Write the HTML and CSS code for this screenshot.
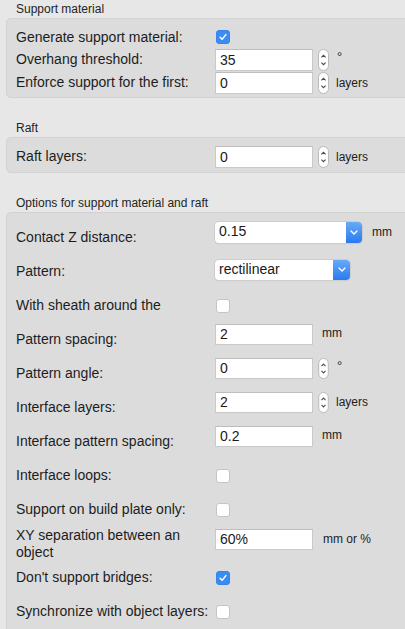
FILE: index.html
```html
<!DOCTYPE html>
<html>
<head>
<meta charset="utf-8">
<link rel="stylesheet" href="styles.css">
</head>
<body>
<div class="page">

  <div class="section">
    <div class="heading">Support material</div>
    <div class="box compact box-support">
      <div class="row first">
        <div class="label">Generate support material:</div>
        <span class="cb checked"><svg viewBox="0 0 14 14"><path d="M3.6 7.3 L6 9.7 L10.4 4.2" class="tick"/></svg></span>
      </div>
      <div class="row">
        <div class="label">Overhang threshold:</div>
        <div class="ctl">
          <div class="input">35</div>
          <svg class="spin" viewBox="0 0 11 22"><rect x="0.5" y="0.5" width="10" height="21" rx="5" class="spin-bg"/><path d="M3.4 8.4 L5.5 6.3 L7.6 8.4" class="chev"/><path d="M3.4 13.6 L5.5 15.7 L7.6 13.6" class="chev"/></svg>
          <span class="unit deg">°</span>
        </div>
      </div>
      <div class="row">
        <div class="label">Enforce support for the first:</div>
        <div class="ctl">
          <div class="input">0</div>
          <svg class="spin" viewBox="0 0 11 22"><rect x="0.5" y="0.5" width="10" height="21" rx="5" class="spin-bg"/><path d="M3.4 8.4 L5.5 6.3 L7.6 8.4" class="chev"/><path d="M3.4 13.6 L5.5 15.7 L7.6 13.6" class="chev"/></svg>
          <span class="unit">layers</span>
        </div>
      </div>
    </div>
  </div>

  <div class="section">
    <div class="heading">Raft</div>
    <div class="box compact box-raft">
      <div class="row">
        <div class="label">Raft layers:</div>
        <div class="ctl">
          <div class="input">0</div>
          <svg class="spin" viewBox="0 0 11 22"><rect x="0.5" y="0.5" width="10" height="21" rx="5" class="spin-bg"/><path d="M3.4 8.4 L5.5 6.3 L7.6 8.4" class="chev"/><path d="M3.4 13.6 L5.5 15.7 L7.6 13.6" class="chev"/></svg>
          <span class="unit">layers</span>
        </div>
      </div>
    </div>
  </div>

  <div class="section">
    <div class="heading">Options for support material and raft</div>
    <div class="box opts">
      <div class="row">
        <div class="label">Contact Z distance:</div>
        <div class="ctl">
          <div class="combo combo-wide">
            <span class="combo-text">0.15</span>
            <span class="combo-btn"><svg viewBox="0 0 8 5"><path d="M1 1 L4 4 L7 1" class="chev-w"/></svg></span>
          </div>
          <span class="unit unit-combo">mm</span>
        </div>
      </div>
      <div class="row">
        <div class="label">Pattern:</div>
        <div class="ctl ctl-low">
          <div class="combo combo-narrow">
            <span class="combo-text">rectilinear</span>
            <span class="combo-btn"><svg viewBox="0 0 8 5"><path d="M1 1 L4 4 L7 1" class="chev-w"/></svg></span>
          </div>
        </div>
      </div>
      <div class="row">
        <div class="label">With sheath around the</div>
        <span class="cb"></span>
      </div>
      <div class="row">
        <div class="label">Pattern spacing:</div>
        <div class="ctl">
          <div class="input">2</div>
          <span class="unit unit-plain">mm</span>
        </div>
      </div>
      <div class="row">
        <div class="label">Pattern angle:</div>
        <div class="ctl">
          <div class="input">0</div>
          <svg class="spin" viewBox="0 0 11 22"><rect x="0.5" y="0.5" width="10" height="21" rx="5" class="spin-bg"/><path d="M3.4 8.4 L5.5 6.3 L7.6 8.4" class="chev"/><path d="M3.4 13.6 L5.5 15.7 L7.6 13.6" class="chev"/></svg>
          <span class="unit deg">°</span>
        </div>
      </div>
      <div class="row">
        <div class="label">Interface layers:</div>
        <div class="ctl">
          <div class="input">2</div>
          <svg class="spin" viewBox="0 0 11 22"><rect x="0.5" y="0.5" width="10" height="21" rx="5" class="spin-bg"/><path d="M3.4 8.4 L5.5 6.3 L7.6 8.4" class="chev"/><path d="M3.4 13.6 L5.5 15.7 L7.6 13.6" class="chev"/></svg>
          <span class="unit">layers</span>
        </div>
      </div>
      <div class="row">
        <div class="label">Interface pattern spacing:</div>
        <div class="ctl">
          <div class="input">0.2</div>
          <span class="unit unit-plain">mm</span>
        </div>
      </div>
      <div class="row">
        <div class="label">Interface loops:</div>
        <span class="cb"></span>
      </div>
      <div class="row">
        <div class="label">Support on build plate only:</div>
        <span class="cb"></span>
      </div>
      <div class="row">
        <div class="label two">XY separation between an<br>object</div>
        <div class="ctl ctl-xy">
          <div class="input">60%</div>
          <span class="unit unit-plain unit-xy">mm or %</span>
        </div>
      </div>
      <div class="row">
        <div class="label">Don't support bridges:</div>
        <span class="cb checked"><svg viewBox="0 0 14 14"><path d="M3.6 7.3 L6 9.7 L10.4 4.2" class="tick"/></svg></span>
      </div>
      <div class="row">
        <div class="label">Synchronize with object layers:</div>
        <span class="cb"></span>
      </div>
    </div>
  </div>

</div>
</body>
</html>
```

FILE: styles.css
```css
html, body {
  margin: 0;
  padding: 0;
}

body {
  width: 405px;
  height: 629px;
  overflow: hidden;
  background: #e7e7e7;
  font-family: "Liberation Sans", Arial, sans-serif;
  color: #1d1d1d;
}

.page {
  padding-top: 2px;
}

.section + .section {
  margin-top: 23px;
}

.heading {
  font-size: 12px;
  line-height: 14px;
  padding-left: 16px;
  margin-bottom: 2px;
  color: #242424;
}

.box {
  margin-left: 6px;
  width: 420px;
  box-sizing: border-box;
  background: #dcdcdc;
  border: 1px solid #d2d2d2;
  border-radius: 5px;
  padding: 7px 0 3px 9px;
}

.box-raft {
  padding-bottom: 4px;
}

.opts {
  padding-top: 6.75px;
  padding-bottom: 4px;
}

.row {
  display: flex;
}

.label {
  width: 199px;
  flex: none;
  font-size: 14px;
  line-height: 17px;
}

.compact .row {
  height: 23px;
  align-items: center;
}

.compact .row.first {
  height: 22px;
}

.ctl {
  display: flex;
  align-items: center;
}

.input {
  width: 98px;
  height: 22px;
  box-sizing: border-box;
  background: #fff;
  border: 1px solid #c9c9c9;
  border-top-color: #bdbdbd;
  font-size: 14px;
  line-height: 20px;
  padding: 0 4px;
  color: #1a1a1a;
}

.spin {
  width: 11px;
  height: 22px;
  margin-left: 5px;
  flex: none;
}

.spin-bg {
  fill: #fff;
  stroke: #b8b8b8;
  stroke-width: 1;
}

.chev {
  fill: none;
  stroke: #4a4a4a;
  stroke-width: 1.1;
}

.unit {
  margin-left: 7px;
  font-size: 12px;
  color: #1d1d1d;
}

.deg {
  font-size: 13px;
  margin-top: -6px;
  margin-left: 8px;
}

.cb {
  display: block;
  width: 14px;
  height: 14px;
  box-sizing: border-box;
  margin-left: 1px;
  background: #fff;
  border: 1px solid #c4c4c4;
  border-radius: 3px;
}

.cb.checked {
  background: #3b8cf2;
  border-color: #3585ec;
}

.cb svg {
  display: block;
  width: 12px;
  height: 12px;
}

.tick {
  fill: none;
  stroke: #fff;
  stroke-width: 1.7;
  stroke-linecap: round;
  stroke-linejoin: round;
}

/* options group */
.opts .row {
  height: 34px;
}

.opts .label {
  align-self: center;
  margin-top: 2px;
}

.opts .cb {
  align-self: center;
  margin-top: 2px;
}

.opts .ctl {
  align-self: flex-start;
  margin-top: 2px;
}

.opts .ctl-low {
  margin-top: 6px;
}

.opts .ctl-xy {
  margin-top: 3px;
}

.opts .input {
  height: 21px;
  line-height: 19px;
}

.opts .spin {
  height: 21px;
}

.unit-plain {
  margin-left: 9px;
  margin-top: -2px;
}

.unit-xy {
  margin-left: 10px;
  margin-top: 0;
}

.unit-combo {
  margin-left: 10px;
}

.combo {
  display: flex;
  height: 21px;
  background: #fff;
  border-radius: 4px;
  box-shadow: 0 0 0 1px #cdcdcd, 0 1px 1px rgba(0, 0, 0, 0.12);
}

.combo-wide {
  width: 147px;
}

.combo-narrow {
  width: 135px;
  height: 20px;
}

.combo-text {
  flex: 1;
  padding-left: 4px;
  font-size: 14px;
  line-height: 19px;
  color: #1a1a1a;
}

.combo-btn {
  width: 16px;
  flex: none;
  background: linear-gradient(#66aafb, #2a7aee);
  border-radius: 0 4px 4px 0;
  display: flex;
  align-items: center;
  justify-content: center;
}

.combo-narrow .combo-btn {
  width: 17px;
}

.combo-btn svg {
  width: 8px;
  height: 5px;
  display: block;
}

.chev-w {
  fill: none;
  stroke: #fff;
  stroke-width: 1.4;
  stroke-linecap: round;
  stroke-linejoin: round;
}
```
